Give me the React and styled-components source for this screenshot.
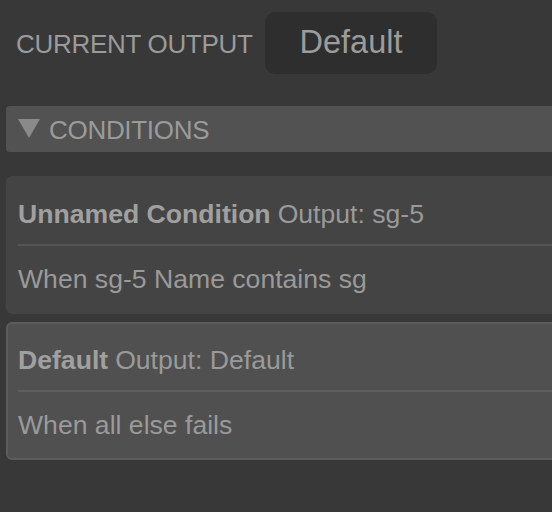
import React from "react";
import styled, { createGlobalStyle } from "styled-components";

const Global = createGlobalStyle`
  html, body {
    margin: 0;
    padding: 0;
    background: #383838;
    overflow: hidden;
  }
  body {
    font-family: "Liberation Sans", Arial, Helvetica, sans-serif;
    color: #9a9a9a;
  }
`;

const Page = styled.div`
  width: 552px;
  overflow: hidden;
  padding: 12px 0 0 6px;
  box-sizing: border-box;
`;

const Inner = styled.div`
  width: 580px;
`;

const Header = styled.div`
  display: flex;
  align-items: center;
  gap: 12px;
  padding-left: 10px;
`;

const Label = styled.span`
  font-size: 26px;
  letter-spacing: -0.3px;
  color: #9b9b9b;
  text-transform: uppercase;
  padding-top: 2px;
`;

const Badge = styled.div`
  height: 62px;
  padding: 0 34px 2px 35px;
  display: flex;
  align-items: center;
  background: #2e2e2e;
  border-radius: 10px;
  font-size: 32.5px;
  color: #9c9c9c;
  box-sizing: border-box;
`;

const SectionBar = styled.div`
  margin-top: 32px;
  height: 46px;
  display: flex;
  align-items: center;
  gap: 9px;
  padding-left: 12px;
  background: #525252;
  border-radius: 4px;
`;

const Triangle = styled.svg`
  width: 22px;
  height: 19px;
  flex: none;
  margin-top: -1px;
`;

const SectionTitle = styled.span`
  font-size: 26px;
  letter-spacing: -0.3px;
  color: #9b9b9b;
  padding-top: 2px;
`;

const List = styled.div`
  margin-top: 24px;
  display: flex;
  flex-direction: column;
  gap: 8px;
`;

const Card = styled.div`
  border: 2px solid ${(p) => (p.$active ? "#5c5c5c" : "#444444")};
  background: ${(p) => (p.$active ? "#505050" : "#444444")};
  border-radius: 6px;
  padding: 0 0 0 10px;
`;

const Row = styled.div`
  display: flex;
  align-items: center;
  font-size: 26.6px;
  color: #9a9a9a;
  white-space: nowrap;
  box-sizing: border-box;
`;

const TitleRow = styled(Row)`
  height: 68px;
  padding-top: 6px;
  border-bottom: 2px solid ${(p) => (p.$active ? "#5e5e5e" : "#555555")};
`;

const BodyRow = styled(Row)`
  height: 66px;
  padding-top: 1px;
`;

const Name = styled.strong`
  font-weight: 700;
  color: #a0a0a0;
  margin-right: 7px;
`;

const conditions = [
  { name: "Unnamed Condition", output: "sg-5", rule: "When sg-5 Name contains sg" },
  { name: "Default", output: "Default", rule: "When all else fails", active: true },
];

export default function App() {
  return (
    <>
      <Global />
      <Page>
        <Inner>
          <Header>
            <Label>Current Output</Label>
            <Badge>Default</Badge>
          </Header>
          <SectionBar>
            <Triangle viewBox="0 0 22 19">
              <polygon points="0,0 22,0 11,19" fill="#8a8a8a" />
            </Triangle>
            <SectionTitle>CONDITIONS</SectionTitle>
          </SectionBar>
          <List>
            {conditions.map((c) => (
              <Card key={c.name} $active={c.active}>
                <TitleRow $active={c.active}>
                  <Name>{c.name}</Name>
                  Output: {c.output}
                </TitleRow>
                <BodyRow>{c.rule}</BodyRow>
              </Card>
            ))}
          </List>
        </Inner>
      </Page>
    </>
  );
}
